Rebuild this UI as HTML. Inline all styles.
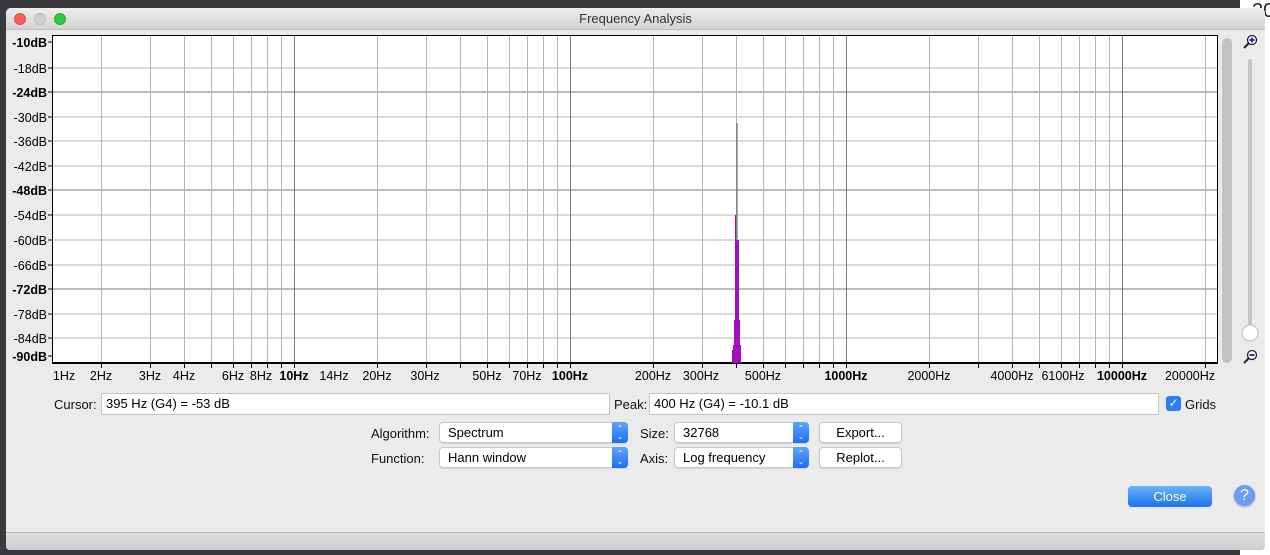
<!DOCTYPE html>
<html><head><meta charset="utf-8"><style>
*{box-sizing:border-box;margin:0;padding:0}
body{width:1270px;height:555px;overflow:hidden;background:#3a3a3e;font-family:"Liberation Sans",sans-serif;position:relative}
.win{position:absolute;left:6px;top:8px;width:1259px;height:542px;background:#ebebeb;border-radius:5px 5px 4px 4px;overflow:hidden}
.tb{position:absolute;left:0;top:0;width:100%;height:22px;background:linear-gradient(#ececec,#d4d4d4);border-bottom:1px solid #bdbdbd;text-align:center;font-size:13px;line-height:22px;color:#333}
.dot{position:absolute;top:5px;width:12px;height:12px;border-radius:50%}
.foot{position:absolute;left:0;top:524px;width:100%;height:18px;border-top:1px solid #b3b3b3;background:linear-gradient(#e0dfe1,#cfcdd0)}
.t{position:absolute;font-size:13px;color:#111;white-space:nowrap}
.inp{position:absolute;height:22px;background:#fff;border:1px solid #c4c4c4;font-size:13px;line-height:20px;padding-left:4px}
.sel{position:absolute;height:21px;background:#fff;border:1px solid #c8c8c8;border-radius:4px;font-size:13px;line-height:19px;padding-left:8px;box-shadow:0 1px 1px rgba(0,0,0,.1)}
.sel i{position:absolute;right:-1px;top:-1px;width:16px;height:21px;background:linear-gradient(#5fa3fb,#1a6ff5);border-radius:0 4px 4px 0;color:#fff;font-style:normal;font-size:8px;line-height:8px;text-align:center;padding-top:3px}
.btn{position:absolute;height:21px;background:#fff;border:1px solid #c8c8c8;border-radius:4px;font-size:13px;line-height:19px;text-align:center;box-shadow:0 1px 1px rgba(0,0,0,.1)}
</style></head><body>
<div style="position:absolute;left:1240px;top:0;width:30px;height:555px;background:#fff"></div>
<div style="position:absolute;left:1252px;top:0;font-size:20px;color:#222">20</div>
<div class="win">
<div class="tb">Frequency Analysis
<div class="dot" style="left:8px;background:#fc605c;border:1px solid #de4a45"></div>
<div class="dot" style="left:28px;background:#cfcfcf;border:1px solid #bdbdbd"></div>
<div class="dot" style="left:48px;background:#34c84a;border:1px solid #27aa35"></div>
</div>
<div class="foot"></div>
</div>
<svg id="g" width="1270" height="555" style="position:absolute;left:0;top:0" font-family="Liberation Sans,sans-serif" font-size="12.5"></svg>
<div class="t" style="left:54px;top:397px">Cursor:</div>
<div class="inp" style="left:101px;top:393px;width:509px">395 Hz (G4) = -53 dB</div>
<div class="t" style="left:614px;top:397px">Peak:</div>
<div class="inp" style="left:649px;top:393px;width:510px">400 Hz (G4) = -10.1 dB</div>
<div style="position:absolute;left:1166px;top:396px;width:15px;height:15px;border-radius:3px;background:#2f7cf6;color:#fff;font-size:12px;line-height:15px;text-align:center">✓</div>
<div class="t" style="left:1185px;top:397px">Grids</div>
<div class="t" style="left:371px;top:426px">Algorithm:</div>
<div class="sel" style="left:439px;top:422px;width:189px">Spectrum<i>⌃<br>⌄</i></div>
<div class="t" style="left:640px;top:426px">Size:</div>
<div class="sel" style="left:674px;top:422px;width:135px">32768<i>⌃<br>⌄</i></div>
<div class="btn" style="left:819px;top:422px;width:83px">Export...</div>
<div class="t" style="left:371px;top:451px">Function:</div>
<div class="sel" style="left:439px;top:447px;width:189px">Hann window<i>⌃<br>⌄</i></div>
<div class="t" style="left:640px;top:451px">Axis:</div>
<div class="sel" style="left:674px;top:447px;width:135px">Log frequency<i>⌃<br>⌄</i></div>
<div class="btn" style="left:819px;top:447px;width:83px">Replot...</div>
<div style="position:absolute;left:1128px;top:486px;width:84px;height:21px;border-radius:4px;background:linear-gradient(#6cb3fa,#1a73f0);color:#fff;font-size:13px;line-height:21px;text-align:center">Close</div>
<div style="position:absolute;left:1234px;top:485px;width:21px;height:21px;border-radius:50%;background:#6d9cf5;color:#fff;font-size:16px;line-height:21px;text-align:center;box-shadow:0 1px 2px rgba(0,0,0,.3)">?</div>
<script>
var s='';
var X=function(f){return 18+276*Math.log10(f)};
s+='<rect x="52" y="35" width="1166" height="328" fill="#fff"/>';
var ys=[68,92,117,141,166,190,215,240,265,289,314,338];
ys.forEach(function(y,i){s+='<line x1="52" x2="1218" y1="'+y+'" y2="'+y+'" stroke="'+((i==1||i==5||i==9)?'#7a7a7a':'#b4b4b4')+'"/>';});
for(var d=1;d<=10000;d*=10){for(var k=1;k<10;k++){var f=d*k,x=Math.round(X(f))+.5;if(x<53||x>1218)continue;
s+='<line x1="'+x+'" x2="'+x+'" y1="35" y2="363" stroke="'+(k==1?'#7a7a7a':'#b4b4b4')+'"/>';s+='<line x1="'+x+'" x2="'+x+'" y1="363" y2="368" stroke="#000"/>';}}
s+='<rect x="52.5" y="35.5" width="1165" height="328" fill="none" stroke="#000"/>';
s+='<line x1="52" x2="1218" y1="363" y2="363" stroke="#000" stroke-width="2"/>';
s+='<rect x="736.5" y="123" width="1" height="240" fill="#555"/>';
[[735,215,1],[736,240,3],[735,290,4],[734,320,6],[733,345,8],[732,350,9]].forEach(function(r){s+='<rect x="'+r[0]+'" y="'+r[1]+'" width="'+r[2]+'" height="'+(363-r[1])+'" fill="#a010c0"/>';});
var dl=[['-10dB',42,1],['-18dB',68],['-24dB',92,1],['-30dB',117],['-36dB',141],['-42dB',166],['-48dB',190,1],['-54dB',215],['-60dB',240],['-66dB',265],['-72dB',289,1],['-78dB',314],['-84dB',338],['-90dB',356,1]];
dl.forEach(function(a){s+='<text x="47" y="'+(a[1]+5)+'" text-anchor="end" font-weight="'+(a[2]?'bold':'normal')+'">'+a[0]+'</text><line x1="48" x2="52" y1="'+a[1]+'" y2="'+a[1]+'" stroke="#000"/>';});
var hl=[['1Hz',64],['2Hz',101],['3Hz',150],['4Hz',184],['6Hz',233],['8Hz',261],['10Hz',294,1],['14Hz',334],['20Hz',377],['30Hz',425],['50Hz',487],['70Hz',527],['100Hz',570,1],['200Hz',653],['300Hz',701],['500Hz',763],['1000Hz',846,1],['2000Hz',929],['4000Hz',1012],['6100Hz',1063],['10000Hz',1122,1],['20000Hz',1190]];
hl.forEach(function(a){s+='<text x="'+a[1]+'" y="380" text-anchor="middle" font-weight="'+(a[2]?'bold':'normal')+'">'+a[0]+'</text>';});
s+='<rect x="1222" y="38" width="10" height="325" rx="5" fill="#c2c2c2"/>';
s+='<rect x="1248" y="59" width="4" height="270" rx="2" fill="#c6c6c6"/>';
s+='<circle cx="1250" cy="333" r="8" fill="#fff" stroke="#bbb"/>';
[[1252,40,'+'],[1252,355,'-']].forEach(function(z){s+='<circle cx="'+z[0]+'" cy="'+z[1]+'" r="4.5" fill="#fff" stroke="#222" stroke-width="1.3"/><line x1="'+(z[0]-3)+'" y1="'+(z[1]+3)+'" x2="'+(z[0]-8)+'" y2="'+(z[1]+8)+'" stroke="#222" stroke-width="2"/><line x1="'+(z[0]-2.5)+'" x2="'+(z[0]+2.5)+'" y1="'+z[1]+'" y2="'+z[1]+'" stroke="#4020c0" stroke-width="2"/>'+(z[2]=='+'?'<line x1="'+z[0]+'" x2="'+z[0]+'" y1="'+(z[1]-2.5)+'" y2="'+(z[1]+2.5)+'" stroke="#4020c0" stroke-width="2"/>':'');});
document.getElementById('g').innerHTML=s;
</script>
</body></html>
